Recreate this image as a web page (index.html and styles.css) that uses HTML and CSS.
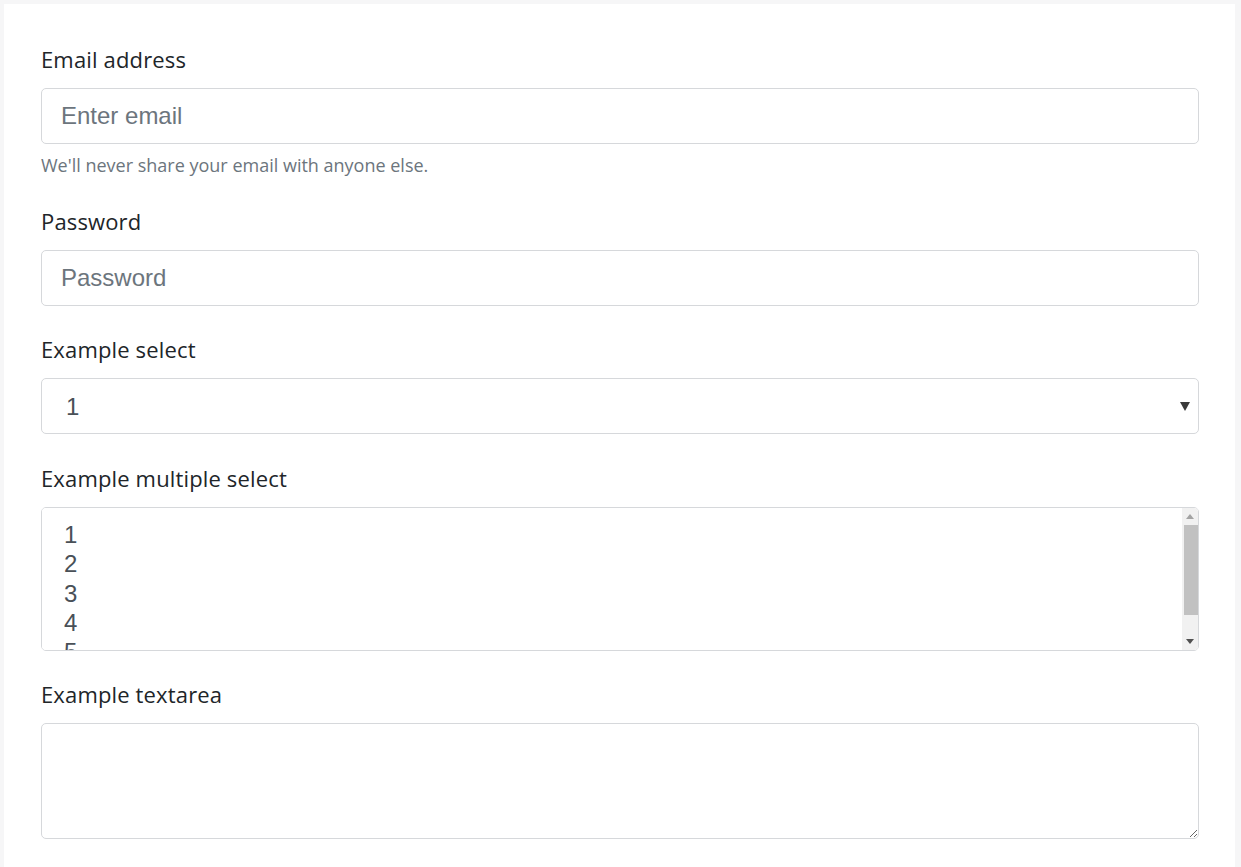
FILE: index.html
```html
<!DOCTYPE html>
<html lang="en">
<head>
    <meta charset="UTF-8">
    <meta name="viewport" content="width=device-width, initial-scale=1.0">
    <title>Form controls</title>
    <link rel="stylesheet" href="styles.css">
</head>
<body>

    <div class="card">
        <form>
            <div class="form-group">
                <label for="email">Email address</label>
                <input type="email" id="email" class="form-control" placeholder="Enter email">
                <small class="form-text">We'll never share your email with anyone else.</small>
            </div>

            <div class="form-group">
                <label for="password">Password</label>
                <input type="password" id="password" class="form-control" placeholder="Password">
            </div>

            <div class="form-group select-group">
                <label for="select1">Example select</label>
                <div class="select-wrap">
                    <select id="select1" class="form-control">
                        <option>1</option>
                        <option>2</option>
                        <option>3</option>
                        <option>4</option>
                        <option>5</option>
                    </select>
                </div>
            </div>

            <div class="form-group">
                <label for="select2">Example multiple select</label>
                <div class="multi-wrap">
                    <select multiple id="select2" class="form-control multi">
                        <option>1</option>
                        <option>2</option>
                        <option>3</option>
                        <option>4</option>
                        <option>5</option>
                    </select>
                    <!-- полоса прокрутки -->
                    <div class="scrollbar">
                        <span class="sb-btn up"></span>
                        <span class="sb-thumb"></span>
                        <span class="sb-track"></span>
                        <span class="sb-btn down"></span>
                    </div>
                </div>
            </div>

            <div class="form-group">
                <label for="textarea1">Example textarea</label>
                <textarea id="textarea1" class="form-control area"></textarea>
            </div>
        </form>
    </div>

</body>
</html>
```

FILE: styles.css
```css
/* Page */
body {
    margin: 0;
    padding: 4px 6px 0 4px;
    background-color: #f6f6f7;
    font-family: 'Open Sans', sans-serif;
    color: #212529;
    height: 863px;
    overflow: hidden;
}

/* Card */
.card {
    background-color: #fff;
    padding: 41px 36px 40px 37px;
    height: 100%;
    box-sizing: border-box;
}

/* Form groups */
.form-group {
    display: flex;
    flex-direction: column;
    margin-bottom: 29px;
}

.select-group {
    margin-bottom: 30px;
}

label {
    font-size: 22px;
    line-height: 28px;
    letter-spacing: 0.15px;
    margin-bottom: 15px;
}

.form-text {
    font-size: 18px;
    line-height: 25px;
    margin-top: 9px;
    color: #6c757d;
}

/* Controls */
.form-control {
    display: block;
    width: 100%;
    height: 56px;
    box-sizing: border-box;
    padding: 0 19px;
    border: 1px solid #d6d8db;
    border-radius: 5px;
    background-color: #fff;
    font-family: 'Liberation Sans', Arial, sans-serif;
    font-size: 24px;
    color: #495057;
    outline: none;
    margin: 0;
}

.form-control::placeholder {
    color: #6c757d;
}

/* Single select */
.select-wrap {
    position: relative;
}

.select-wrap select {
    appearance: none;
    -webkit-appearance: none;
    padding-left: 24px;
}

.select-wrap::after {
    content: '';
    position: absolute;
    right: 9px;
    top: 24px;
    border-left: 5px solid transparent;
    border-right: 5px solid transparent;
    border-top: 9px solid #3a3a3a;
}

/* Multiple select */
.multi-wrap {
    position: relative;
}

.multi {
    height: 144px;
    padding: 13px 20px 11px;
}

.multi option {
    padding: 0 2px 0.5px;
    line-height: 29px;
}

.scrollbar {
    position: absolute;
    top: 1px;
    right: 1px;
    bottom: 1px;
    width: 16px;
    display: flex;
    flex-direction: column;
    background-color: #f1f1f1;
    border-radius: 0 4px 4px 0;
}

.sb-btn {
    height: 17px;
    display: flex;
    align-items: center;
    justify-content: center;
}

.sb-btn::before {
    content: '';
    border-left: 4px solid transparent;
    border-right: 4px solid transparent;
}

.sb-btn.up::before {
    border-bottom: 5px solid #a3a3a3;
}

.sb-btn.down::before {
    border-top: 5px solid #505050;
}

.sb-thumb {
    height: 90px;
    margin-left: 2px;
    background-color: #c1c1c1;
}

.sb-track {
    flex: 1;
}

/* Textarea */
.area {
    height: 116px;
    padding: 12px 19px;
}
```
